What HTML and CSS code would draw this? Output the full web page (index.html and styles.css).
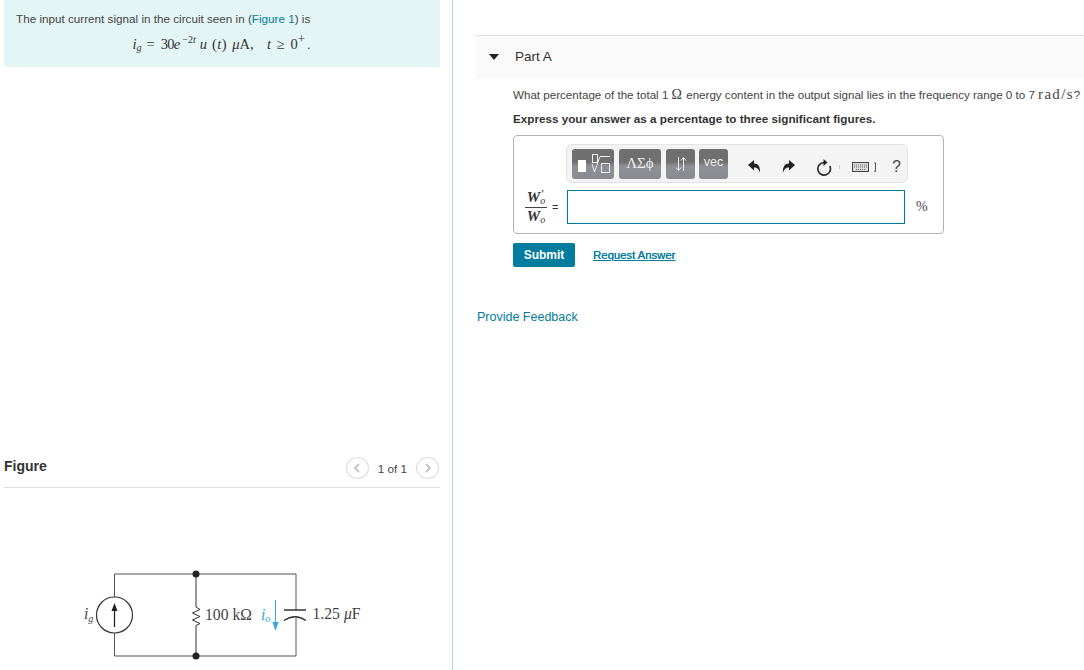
FILE: index.html
```html
<!DOCTYPE html>
<html lang="en">
<head>
<meta charset="utf-8">
<title>Part A</title>
<link rel="stylesheet" href="styles.css">
</head>
<body>
<div class="page">
  <aside class="left">
    <section class="intro">
      <p class="intro-text">The input current signal in the circuit seen in (<a class="link">Figure 1</a>) is</p>
      <div class="equation"><span class="m">i<sub>g</sub></span><span class="eq">=</span><span class="tight">30</span><span class="m">e</span><sup class="exp">−2<span class="m">t</span></sup><span class="m u">u</span><span class="pt">(<span class="m">t</span>)</span><span class="unit"><span class="m">μ</span>A,</span><span class="m cond">t</span><span class="geq">≥</span><span class="zero">0</span><sup class="plus">+</sup><span class="dot">.</span></div>
    </section>
    <section class="figure">
      <header class="fig-head">
        <h2 class="fig-title">Figure</h2>
        <div class="pager">
          <span class="pg-btn"><svg width="8" height="10" viewBox="0 0 8 10"><path d="M6 1 2 5l4 4" fill="none" stroke="#c4c4c4" stroke-width="2"/></svg></span>
          <span class="pg-text">1 of 1</span>
          <span class="pg-btn"><svg width="8" height="10" viewBox="0 0 8 10"><path d="M2 1l4 4-4 4" fill="none" stroke="#c4c4c4" stroke-width="2"/></svg></span>
        </div>
      </header>
      <svg class="circuit" width="310" height="110" viewBox="0 0 310 110">
        <g fill="none" stroke="#555" stroke-width="1">
          <path d="M44.500 37V14H226V50M226 58V96H44.500V73"/>
          <path d="M126 14V47l4 2.500-7.500 3.500 7.500 3.500-7.500 3.500 7.500 3.500-4 2V96" stroke="#333"/>
          <circle cx="44.500" cy="55" r="18" stroke="#333" stroke-width="1.200"/>
          <path d="M214 50H236M214 60.500Q225 53 236 60.500" stroke="#333" stroke-width="1.300"/>
          <path d="M44.500 67V48" stroke="#222" stroke-width="1.300"/>
          <path d="M205.500 40V64" stroke="#34a5e0" stroke-width="1"/>
        </g>
        <path d="M44.500 43l-3 8h6z" fill="#222"/>
        <path d="M205.500 71l-3-9h6z" fill="#34a5e0"/>
        <circle cx="126" cy="14" r="3.500" fill="#222"/>
        <circle cx="126" cy="96" r="3.500" fill="#222"/>
        <text class="c-label c-i" x="14" y="59">i<tspan class="c-sub" dy="3">g</tspan></text>
        <text class="c-label" x="135" y="60">100 kΩ</text>
        <text class="c-label c-i c-blue" x="191" y="60">i<tspan class="c-sub" dy="2">o</tspan></text>
        <text class="c-label" x="242.500" y="59">1.25 <tspan class="c-i">μ</tspan>F</text>
      </svg>
    </section>
  </aside>
  <main class="right">
    <div class="part-head">
      <svg class="caret" width="10" height="6" viewBox="0 0 10 6"><path d="M0 0h10L5 6z" fill="#222"/></svg>
      <h1 class="part-title">Part A</h1>
    </div>
    <div class="part-body">
      <p class="question">What percentage of the total 1 <span class="serif omega">Ω</span> energy content in the output signal lies in the frequency range 0 to 7 <span class="serif rad">rad/s</span>?</p>
      <p class="instruction">Express your answer as a percentage to three significant figures.</p>
      <div class="answer-box">
        <div class="toolbar">
          <div class="tools">
            <span class="tool tool-root"><svg width="42" height="30" viewBox="0 0 42 30"><rect x="6" y="11" width="8" height="12" fill="#fff"/><g fill="none" stroke="#eee" stroke-width="1"><rect x="20.500" y="5.500" width="5" height="8"/><path d="M20 15l2.500 8L28 7.500h10"/><rect x="29.500" y="14.500" width="8" height="9"/></g></svg></span>
            <span class="tool tool-greek">ΛΣϕ</span>
            <span class="tool tool-arrows"><svg width="12" height="14" viewBox="0 0 12 14"><g fill="none" stroke="#eee" stroke-width="1"><path d="M3.500 0v13M1 10.500l2.500 3 2.500-3M8.500 14V1M6 3.500l2.500-3 2.500 3"/></g></svg></span>
            <span class="tool tool-vec">vec</span>
          </div>
          <div class="actions">
            <svg class="act-undo" width="14" height="14" viewBox="0 0 14 14"><path d="M1 5 7 0v3.500c4 0 6.500 3 6 9.500-1-4-3-5.500-6-5.500v3z" fill="#222"/></svg>
            <svg class="act-redo" width="14" height="14" viewBox="0 0 14 14"><path d="M13 5 7 0v3.500c-4 0-6.500 3-6 9.500 1-4 3-5.500 6-5.500v3z" fill="#222"/></svg>
            <svg class="act-reset" width="16" height="17" viewBox="0 0 16 17"><path d="M8 3.500a6.300 6.300 0 1 0 5.800 3.500" fill="none" stroke="#222" stroke-width="1.600"/><path d="M7.500 0l4 3.500-4 3.500z" fill="#222"/></svg>
            <span class="act-sep"></span>
            <svg class="act-kbd" width="26" height="11" viewBox="0 0 26 11"><rect x=".5" y=".5" width="16" height="9" fill="#ddd" stroke="#444"/><path d="M2 3h13M2 5h13M4 7.500h9" stroke="#666" stroke-dasharray="1 1"/><path d="M22 1h1.500v8.500H22" fill="none" stroke="#555"/></svg>
            <span class="act-help">?</span>
          </div>
        </div>
        <div class="answer-row">
          <div class="fraction">
            <span class="num">W<span class="scripts"><span class="prime">′</span><span class="sub-o">o</span></span></span>
            <span class="den">W<span class="sub-o den-o">o</span></span>
          </div>
          <span class="equals">=</span>
          <input class="answer-input" type="text" aria-label="answer">
          <span class="percent">%</span>
        </div>
      </div>
      <div class="actions-row">
        <button class="submit" type="button">Submit</button>
        <a class="request">Request Answer</a>
      </div>
    </div>
    <a class="feedback">Provide Feedback</a>
  </main>
</div>
</body>
</html>
```
FILE: styles.css
```css
* { box-sizing: border-box; }
html, body { margin: 0; padding: 0; }
body { font-family: "Liberation Sans", Arial, sans-serif; color: #333; background: #fff; }
.page { display: flex; width: 1084px; height: 670px; overflow: hidden; }

.left { width: 453px; flex: none; border-right: 1px solid #b9d1e3; padding-left: 4px; display: flex; flex-direction: column; }
.intro { width: 436px; height: 67px; background: #e4f5f6; padding: 12px 12px 0; }
.intro-text { margin: 0; font-size: 11.700px; line-height: 14px; color: #444; }
.link { color: #007c9e; }
.equation { display: flex; align-items: baseline; margin: 9px 0 0 116.500px; font-family: "Liberation Serif", serif; font-size: 14.500px; line-height: 18px; color: #333; white-space: nowrap; }
.equation sub { font-size: 10px; line-height: 0; vertical-align: -2px; }
.equation sup { line-height: 0; }
.m { font-style: italic; }
.eq { margin: 0 6px 0 5px; }
.tight { letter-spacing: -.7px; }
.exp { font-size: 10px; margin-left: 2px; position: relative; top: -6px; }
.u { margin-left: 4px; }
.pt { margin-left: 5px; letter-spacing: .5px; }
.unit { margin-left: 5px; }
.cond { margin-left: 13.500px; }
.geq { margin-left: 6px; }
.zero { margin-left: 5.500px; }
.plus { font-size: 13px; position: relative; top: -6px; }
.dot { font-size: 12px; margin-left: 2px; }

.figure { margin-top: auto; width: 436px; }
.fig-head { display: flex; align-items: center; justify-content: space-between; height: 30px; border-bottom: 1px solid #ddd; padding: 0 1px 14px 0; }
.fig-title { margin: 0; font-size: 14px; font-weight: 700; color: #333; }
.pager { display: flex; align-items: center; gap: 9px; padding-top: 5px; }
.pg-btn { width: 23px; height: 22px; border: 1px solid #ddd; border-radius: 50%; display: flex; align-items: center; justify-content: center; }
.pg-text { font-size: 11.700px; color: #444; }
.circuit { display: block; margin: 72px 0 0 66px; }
.c-label { font-family: "Liberation Serif", serif; font-size: 15.700px; fill: #444; }
.c-i { font-style: italic; }
.c-sub { font-size: 10px; }
.c-blue { fill: #34a5e0; }

.right { flex: 1; min-width: 0; padding: 35px 0 0 0; }
.part-head { display: flex; align-items: center; height: 43px; margin-left: 23px; background: #fafafa; border-top: 1px solid #e4e4e4; padding: 0 0 2px 13px; }
.caret { margin-right: 16px; margin-top: 2px; }
.part-title { margin: 0; font-size: 13.500px; font-weight: normal; color: #333; }
.part-body { padding: 9px 0 0 60px; }
.question { margin: 0; font-size: 11.600px; line-height: 16px; color: #444; white-space: nowrap; }
.serif { font-family: "Liberation Serif", serif; font-size: 14px; line-height: 0; }
.omega { margin-right: 1px; }
.rad { font-size: 15px; letter-spacing: 1.300px; }
.instruction { margin: 8px 0 0; font-size: 11.700px; font-weight: 700; line-height: 16px; color: #333; }
.answer-box { width: 431px; height: 99px; margin-top: 8px; border: 1px solid #b4b4b4; border-radius: 4px; padding: 8px 0 0 52px; }
.toolbar { display: flex; align-items: center; width: 342px; height: 39px; background: #f4f4f4; border: 1px solid #e2e2e2; border-radius: 6px; padding-left: 5px; }
.tools { display: flex; gap: 5px; align-items: center; }
.tool { display: flex; align-items: center; justify-content: center; height: 30px; border-radius: 3px; color: #eee; background: linear-gradient(#6f6f6f 0, #6f6f6f 42%, #8e8e96 58%, #8a8a90 100%); }
.tool-root { width: 42px; }
.tool-greek { width: 42px; font-family: "Liberation Serif", serif; font-size: 15px; }
.tool-arrows { width: 29px; }
.tool-vec { width: 29px; font-size: 12.500px; padding-bottom: 3px; margin-left: -1px; }
.actions { display: flex; align-items: center; margin: 7px 0 0 19px; }
.act-redo { margin-left: 21px; }
.act-reset { margin-left: 20px; }
.act-sep { width: 1px; height: 4px; background: #ccc; margin-left: 7px; }
.act-kbd { margin-left: 12px; }
.act-help { font-size: 16px; color: #444; margin-left: 14px; }
.answer-row { display: flex; align-items: center; margin: 7px 0 0 -41px; height: 34px; }
.fraction { width: 22px; flex: none; display: flex; flex-direction: column; align-items: center; font-family: "Liberation Serif", serif; font-style: italic; font-weight: 700; font-size: 15px; line-height: 16px; color: #333; }
.scripts { display: inline-flex; flex-direction: column; vertical-align: 5px; font-size: 10px; font-weight: 400; line-height: 7px; }
.prime { height: 7px; font-weight: 700; }
.sub-o { font-size: 10px; font-weight: 400; line-height: 7px; }
.den-o { vertical-align: -2px; }
.num { border-bottom: 1px solid #444; width: 100%; text-align: center; height: 19px; white-space: nowrap; }
.den { height: 17px; white-space: nowrap; }
.equals { font-size: 11px; margin-left: 5px; width: 15px; flex: none; color: #333; }
.answer-input { width: 338px; height: 34px; flex: none; border: 1px solid #007c9e; margin: 0; padding: 0; background: #fff; border-radius: 0; outline: none; }
.percent { font-family: "Liberation Serif", serif; font-size: 14px; margin-left: 11px; color: #444; }
.actions-row { display: flex; align-items: center; margin-top: 9px; }
.submit { width: 62px; height: 24px; border: 0; border-radius: 2px; background: #007c9e; color: #fff; font: 700 12px "Liberation Sans", Arial, sans-serif; padding: 0; }
.request { margin: 0 0 1px 18px; font-size: 11.300px; color: #007c9e; text-decoration: underline; text-shadow: .2px 0 0 #007c9e; }
.feedback { display: block; margin: 43px 0 0 24px; font-size: 12.500px; line-height: 14px; color: #007c9e; }
```
